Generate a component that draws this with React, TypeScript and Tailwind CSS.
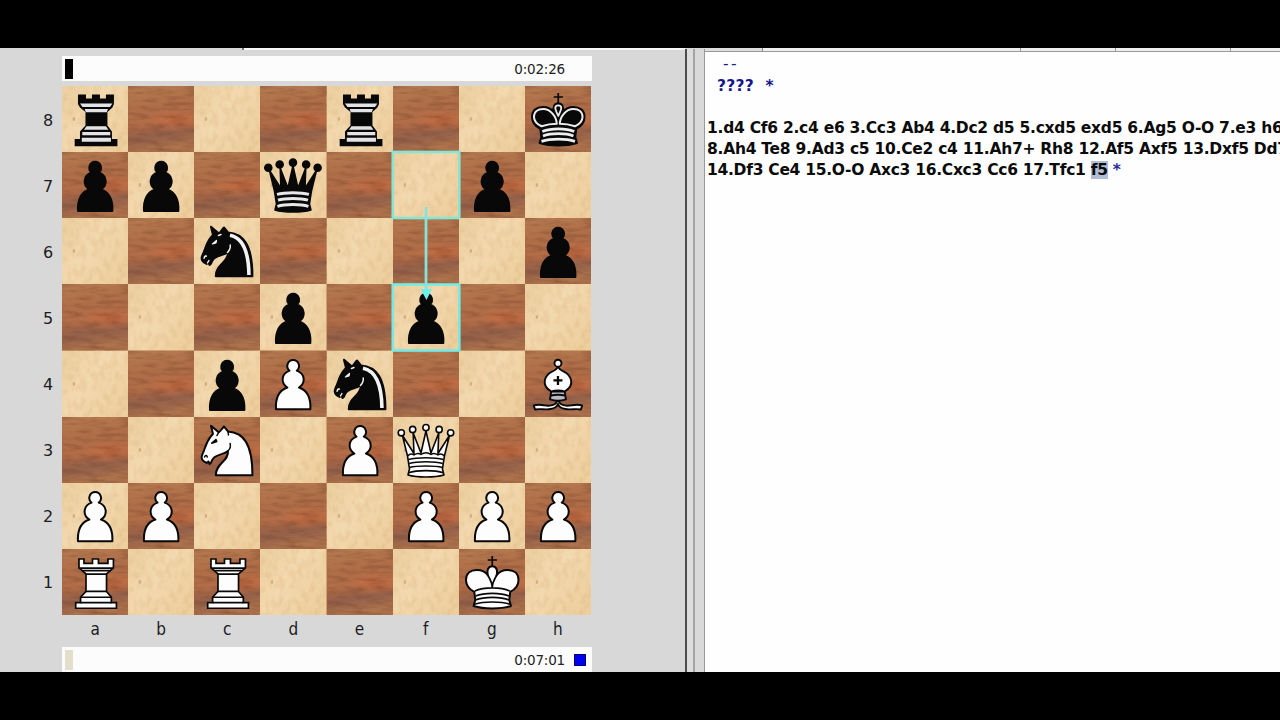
import React from "react";

const SANS = "font-['DejaVu_Sans_Condensed','DejaVu_Sans',sans-serif] [font-stretch:condensed]";
const WIDE = "font-['DejaVu_Sans',sans-serif] [font-stretch:normal]";

const POSITION = [
  "r...r..k",
  "pp.q..p.",
  "..n....p",
  "...p.p..",
  "..pPn..B",
  "..N.PQ..",
  "PP...PPP",
  "R.R...K.",
];

const INK = "#080808";
const PAPER = "#fdfdfd";

function Pawn({ white }: { white: boolean }) {
  return (
    <path
      d="M16 58.3C15.4 48 19 39.5 27.4 36.6C20.5 32.5 21 22.7 29.6 19.7C25 15.8 28 9 33.2 9S41.400 15.800 36.800 19.700C45.400 22.700 45.900 32.500 39 36.600C47.400 39.500 51 48 50.400 58.300Z"
      transform={white ? undefined : "translate(0 0.800)"}
      fill={white ? PAPER : INK}
      stroke={INK}
      strokeWidth="2"
      strokeLinejoin="round"
    />
  );
}

function Rook({ white }: { white: boolean }) {
  if (white) {
    return (
      <g fill={PAPER} stroke={INK} strokeWidth="1.700" strokeLinejoin="miter">
        <path d="M17 10H22V14.300H30.500V10H36.500V14.300H46V10H51.500V19L44.600 25V42.500L49.400 48.300V53.700H54.500V59.300H13.700V53.700H18.600V48.300L24 42.500V25L17 19Z" />
        <path d="M17 19.200H51.500M20 21.700H48.500M24 25.200H44.600M24 42.500H44.600M18.600 48.300H49.400M18.600 53.700H49.400" fill="none" />
      </g>
    );
  }
  return (
    <g>
      <path d="M16 8.500H24V12.500H30V8.500H38V12.500H44V8.500H52V18L50.500 21.500L45.500 26V39.500L50 45.500V53H55.500V60.300H12.700V53H18V45.500L23.500 39.500V26L18 21.500L16 18Z" fill={INK} />
      <path d="M18 17.600H50.500L48 21H20.500ZM22.700 23H46L44.800 26.300H23.800ZM24.500 40.300H44L46.500 43.700H22ZM20.300 46H48.300V49.300H20.300ZM19.800 51.900H49V55.700H19.800Z" fill="#e3e3e6" />
    </g>
  );
}

function Knight({ white }: { white: boolean }) {
  return (
    <g strokeLinejoin="round" strokeLinecap="round">
      <path
        d="M21.800 58.200C21.800 46 35 44.500 34 34C29 38 22 37.600 19.300 41.500C17 43.500 18 46.500 15.500 47L14.500 44.500L12.500 46C8 44 6.500 41.500 8.500 37C11.500 31 12 25.500 16.500 20L19 17L17 8.800L24.700 15.300C26.500 14.700 27.500 12 30 9.500L34 14.500C49 15.500 58.500 26 58.500 58.200Z"
        fill={white ? PAPER : INK}
        stroke={INK}
        strokeWidth="2"
      />
      {white ? (
        <g fill="none" stroke={INK} strokeWidth="1.500">
          <path d="M24.700 15.300L23 18.500M34 14.500L34.500 18M36.200 26.500C37 29.500 36 32 34 34M10.500 40C11.500 37.800 12.800 38 13.300 40" />
          <path d="M17.800 26.200L22 22.500L22.800 24.500Z" fill={INK} />
        </g>
      ) : (
        <g fill="none" stroke="#f2f2f2">
          <path d="M36 17.200C48 19.500 54.700 31 55 57" strokeWidth="3.600" strokeLinecap="butt" />
          <path d="M36.300 27C36.600 30 35.500 32.500 33.500 34.500M24.500 17.500L27 16.500" strokeWidth="1.500" />
          <path d="M18.500 26L22.500 22.500L22 25ZM10 40.500C10.500 38 11.500 37.500 12.500 38.200M13.500 45L15 42.500" strokeWidth="1.300" fill="#f2f2f2" />
        </g>
      )}
    </g>
  );
}

function Bishop() {
  return (
    <g fill={PAPER} stroke={INK} strokeWidth="1.900" strokeLinejoin="round">
      <path d="M33 48C32 54.500 26 55.500 19 54.300C15 53.500 12 53.500 8.800 54.500L10 58.600C15 57.500 18 58.800 24 58.300C29 57.800 32 56 33 53C34 56 37 57.800 42 58.300C48 58.800 51 57.500 56 58.600L57.200 54.500C54 53.500 51 53.500 47 54.300C40 55.500 34 54.500 33 48Z" />
      <path d="M25 48.500L26.300 40.500H39.700L41 48.500C36 50.200 30 50.200 25 48.500Z" fill="#b9bbc3" />
      <path d="M26 44.600C31 43.500 35 43.500 40 44.600" fill="none" />
      <path d="M26.300 40.500C15 34 20 24 27.500 20.500C30.500 19 32 17.700 33 16C34 17.700 35.500 19 38.500 20.500C46 24 51 34 39.700 40.500C35 39.200 31 39.200 26.300 40.500Z" />
      <circle cx="33" cy="12.200" r="3.500" />
      <path d="M33 25V34M28.500 29.500H37.500" strokeWidth="2.300" />
    </g>
  );
}

const QUEEN_BALLS = [
  [8.300, 15.800],
  [19.700, 12.500],
  [33, 10.600],
  [46.200, 12.500],
  [57.700, 15.800],
];

function Queen({ white }: { white: boolean }) {
  return (
    <g stroke={INK} strokeLinejoin="round">
      <path
        d="M14.500 39L9.500 18.500L21 36.500L20.200 16L28 36L33 14L38 36L45.800 16L45 36.500L56.500 18.500L51.500 39L49.500 52L51 58C42 60.700 24 60.700 15 58L16.500 52Z"
        fill={white ? PAPER : INK}
        strokeWidth="1.600"
      />
      {QUEEN_BALLS.map(([x, y]) => (
        <circle key={x} cx={x} cy={y} r={white ? 3.100 : 3.500} fill={white ? PAPER : INK} strokeWidth="1.600" />
      ))}
      {white ? (
        <g fill="none" strokeWidth="1.600">
          <path d="M14.500 39C17 36.500 19 36.500 21 38C24 36 26 36 28 37.500C31 35.500 35 35.500 38 37.500C40 36 42 36 45 38C47 36.500 49 36.500 51.500 39" />
          <path d="M15.500 42.500C24 40.300 42 40.300 50.500 42.500M16.200 46.500C24 44.300 42 44.300 49.800 46.500M16.500 50.500C24 48.500 42 48.500 49.500 50.500M15.500 55.800C24 53 42 53 50.500 55.800" />
        </g>
      ) : (
        <path d="M17 42.500C25 40.300 41 40.300 49 42.500M18 48.200C25 46 41 46 48 48.200M17.500 54.500C25 52 41 52 48.500 54.500" fill="none" stroke="#e8e8ea" strokeWidth="2.900" />
      )}
    </g>
  );
}

function King({ white }: { white: boolean }) {
  const line = white ? INK : "#eeeeee";
  return (
    <g strokeLinejoin="round">
      <path d="M33.300 7V17M28.700 11H38" stroke={INK} strokeWidth="1.700" fill="none" />
      <path
        d="M15.300 43C9.500 40 7 35 7 31C7 24 12 21 18 21C23 21 27 23.500 29 26.500C27.500 21 29.500 17.200 33.300 17.200S39.100 21 37.600 26.500C39.600 23.500 43.600 21 48.600 21C54.600 21 59.600 24 59.600 31C59.600 35 57.100 40 51.300 43L50.300 51L52 57C42 60.300 24.600 60.300 14.600 57L16.300 51Z"
        fill={white ? PAPER : INK}
        stroke={INK}
        strokeWidth="2"
      />
      {white ? (
        <path d="M29 26.500C31 30 33.300 34 33.300 38.500C33.300 34 35.600 30 37.600 26.500M15.800 42C25 38 42 38 50.800 42M16.600 47C25 43.500 42 43.500 50 47M16.500 51C25 47.500 42 47.500 50 51M15.500 55.300C25 52.300 42 52.300 51 55.300" fill="none" stroke={line} strokeWidth="1.700" />
      ) : (
        <g fill="none" stroke={line}>
          <path d="M16.500 40.300C11 37.500 9 34 9 31C9 25.500 13 23 18 23C26 23 31.500 31 31.800 37.800C26 37.800 21 38.800 16.500 40.300ZM50.100 40.300C55.600 37.500 57.600 34 57.600 31C57.600 25.500 53.600 23 48.600 23C40.600 23 35.100 31 34.800 37.800C40.600 37.800 45.600 38.800 50.100 40.300Z" strokeWidth="2" />
          <path d="M33.300 30C31.500 26 30.300 24 30.300 22C30.300 18.500 36.300 18.500 36.300 22C36.300 24 35.100 26 33.300 30Z" strokeWidth="1.800" />
          <path d="M17.300 45.500C26 42 41 42 49.300 45.500M18 50C26 47 41 47 48.500 50M16.500 55.500C26 52.500 41 52.500 50 55.500" strokeWidth="2.800" />
        </g>
      )}
    </g>
  );
}

function Piece({ code }: { code: string }) {
  const white = code === code.toUpperCase();
  switch (code.toLowerCase()) {
    case "p":
      return <Pawn white={white} />;
    case "r":
      return <Rook white={white} />;
    case "n":
      return <Knight white={white} />;
    case "b":
      return <Bishop />;
    case "q":
      return <Queen white={white} />;
    case "k":
      return <King white={white} />;
    default:
      return null;
  }
}

function WoodDefs() {
  return (
    <svg className="absolute h-0 w-0" aria-hidden="true">
      <defs>
        <filter id="grain-dark" x="0" y="0" width="1" height="1" colorInterpolationFilters="sRGB">
          <feTurbulence type="fractalNoise" baseFrequency="0.05 0.24" numOctaves="4" seed="4" />
          <feColorMatrix values="0 0 0 0 0.38  0 0 0 0 0.2  0 0 0 0 0.12  0.7 0 0 0 -0.28" />
        </filter>
        <filter id="grain-light" x="0" y="0" width="1" height="1" colorInterpolationFilters="sRGB">
          <feTurbulence type="fractalNoise" baseFrequency="0.16 0.1" numOctaves="4" seed="9" />
          <feColorMatrix values="0 0 0 0 0.8  0 0 0 0 0.6  0 0 0 0 0.36  0.5 0 0 0 -0.2" />
        </filter>
        <linearGradient id="wood-dark" x1="0" y1="0" x2="0.150" y2="1">
          <stop offset="0" stopColor="#b67b51" />
          <stop offset="0.350" stopColor="#af6e48" />
          <stop offset="0.600" stopColor="#b26d48" />
          <stop offset="0.800" stopColor="#93604a" />
          <stop offset="1" stopColor="#ae734d" />
        </linearGradient>
        <radialGradient id="wood-glow" cx="0.750" cy="0.520" r="0.500" gradientTransform="translate(0 0.340) scale(1 0.350)">
          <stop offset="0" stopColor="#cc6c40" stopOpacity="0.800" />
          <stop offset="1" stopColor="#c86c40" stopOpacity="0" />
        </radialGradient>
        <linearGradient id="wood-light" x1="0" y1="0" x2="1" y2="0.700">
          <stop offset="0" stopColor="#edd0a1" />
          <stop offset="0.500" stopColor="#f3d9af" />
          <stop offset="1" stopColor="#eecf9f" />
        </linearGradient>
      </defs>
    </svg>
  );
}

function Square({ code, dark }: { code: string; dark: boolean }) {
  return (
    <svg viewBox="0 0 66.200 66.200" preserveAspectRatio="none" className="block h-full w-full">
      <rect width="66.200" height="66.200" fill={dark ? "url(#wood-dark)" : "url(#wood-light)"} />
      {dark && <rect width="66.200" height="66.200" fill="url(#wood-glow)" />}
      <rect width="66.200" height="66.200" filter={dark ? "url(#grain-dark)" : "url(#grain-light)"} />
      {!dark && <ellipse cx="12" cy="33" rx="1.300" ry="2" fill="#b98d58" opacity="0.500" />}
      <Piece code={code} />
    </svg>
  );
}

function Board() {
  return (
    <div className="relative grid h-[529px] w-[529px] grid-cols-8 grid-rows-8 bg-[#c99a6c]">
      {POSITION.flatMap((row, r) =>
        row.split("").map((code, f) => <Square key={`${r}-${f}`} code={code} dark={(r + f) % 2 === 1} />),
      )}
      <svg className="absolute inset-0" width="529" height="529" viewBox="0 0 529 529" fill="none">
        <rect x="330.800" y="66" width="66.500" height="66" stroke="#86e6d6" strokeWidth="2.600" />
        <rect x="330.800" y="198.500" width="66.500" height="66" stroke="#74ebe5" strokeWidth="2.600" />
        <path d="M364 121V205" stroke="#87e3d8" strokeWidth="2.800" />
        <path d="M358.500 203H370L364.500 214Z" fill="#6cf0ee" />
      </svg>
    </div>
  );
}

function ChessPanel() {
  return (
    <section className="flex h-full w-[685px] shrink-0 flex-col bg-[#d8d8d8]">
      <div className="flex h-2 shrink-0 justify-end">
        <div className="h-[2px] w-[443px] border-l-2 border-[#777] bg-[#f7f7f7]" />
      </div>
      <div className="ml-[62px] flex h-[25px] w-[530px] shrink-0 items-center bg-[#fcfcfc] pl-[3px] pr-[27px]">
        <div className="h-5 w-[8px] bg-black" />
        <span className={`ml-auto pt-[2px] text-[13.500px] leading-none tracking-[-0.200px] text-[#222] ${WIDE}`}>0:02:26</span>
      </div>
      <div className="mt-[5px] flex h-[529px] shrink-0">
        <div className="grid w-[62px] grid-rows-8 pl-[34px] text-center text-[16px] leading-none text-[#1c1c24]">
          {[8, 7, 6, 5, 4, 3, 2, 1].map((n) => (
            <span key={n} className={`flex w-7 items-center justify-center pt-[3px] ${WIDE}`}>{n}</span>
          ))}
        </div>
        <Board />
      </div>
      <div className="ml-[62px] grid h-8 w-[529px] shrink-0 grid-cols-8 pt-[4px] text-center text-[17px] leading-5 text-[#1c1c24]">
        {["a", "b", "c", "d", "e", "f", "g", "h"].map((f) => (
          <span key={f}>{f}</span>
        ))}
      </div>
      <div className="ml-[62px] flex h-[25px] w-[530px] shrink-0 items-center bg-[#fcfcfc] pl-[3px] pr-[6px]">
        <div className="h-5 w-[8px] bg-[#e3dfcb]" />
        <span className={`ml-auto pt-[2px] text-[13.500px] leading-none tracking-[-0.200px] text-[#222] ${WIDE}`}>0:07:01</span>
        <div className="ml-[9px] h-3 w-3 border border-[#00006e] bg-[#0000f0]" />
      </div>
    </section>
  );
}

function Splitter() {
  return (
    <div className="flex h-full w-5 shrink-0 bg-[#d8d8d8] pt-[1px]">
      <div className="w-[2px] bg-[#4c4c4c]" />
      <div className="w-[6px] bg-[#dcdcdc]" />
      <div className="w-[2px] bg-[#a4a4a4]" />
      <div className="w-[9px] bg-[#d9d9d9]" />
      <div className="w-px bg-[#999]" />
    </div>
  );
}

function Notation() {
  return (
    <section className="flex h-full min-w-0 flex-1 flex-col overflow-hidden bg-[#fefefe]">
      <div className="flex h-[4px] shrink-0 border-b border-[#999] bg-[#dedede]">
        <div className="w-[58px] border-r border-[#888]" />
        <div className="w-[258px] border-r border-[#999] bg-[#efefef]" />
        <div className="w-[95px] border-r border-[#999] bg-[#efefef]" />
        <div className="w-[115px] border-r border-[#999] bg-[#efefef]" />
        <div className="flex-1 bg-[#efefef]" />
      </div>
      <div className={`whitespace-pre pl-[2px] pt-[2px] text-[15.500px] font-bold leading-[21px] text-[#0b0b0b] ${WIDE}`}>
        <div className="pl-4 font-normal tracking-[2.500px] text-[#20207a]">--</div>
        <div className="pl-[10px] pt-px tracking-[0.300px] text-[#16168c]">????  *</div>
        <div className="h-[21px]" />
        <div className="tracking-[-0.260px]">1.d4 Cf6 2.c4 e6 3.Cc3 Ab4 4.Dc2 d5 5.cxd5 exd5 6.Ag5 O-O 7.e3 h6</div>
        <div className="tracking-[-0.260px]">8.Ah4 Te8 9.Ad3 c5 10.Ce2 c4 11.Ah7+ Rh8 12.Af5 Axf5 13.Dxf5 Dd7</div>
        <div className="tracking-[-0.280px]">
          14.Df3 Ce4 15.O-O Axc3 16.Cxc3 Cc6 17.Tfc1 <span className="bg-[#b0bdd5]">f5</span> <span className="text-[#2929a0]">*</span>
        </div>
      </div>
    </section>
  );
}

export default function App() {
  return (
    <div className={`flex h-[720px] w-[1280px] flex-col overflow-hidden bg-black py-12 ${SANS}`}>
      <WoodDefs />
      <main className="flex h-[624px] w-full overflow-hidden">
        <ChessPanel />
        <Splitter />
        <Notation />
      </main>
    </div>
  );
}
